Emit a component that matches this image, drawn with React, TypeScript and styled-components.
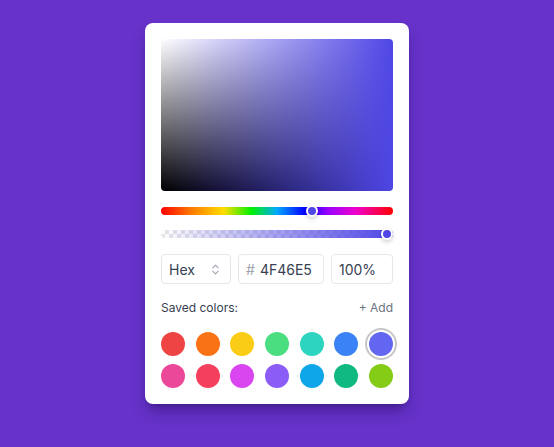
import * as React from "react"
import styled, { createGlobalStyle } from "styled-components"
import { ChevronsUpDown } from "lucide-react"

const HEX = "#4F46E5"
const HUE_POS = 65
const ALPHA_POS = 97.6

const SAVED = [
  "#ef4444", "#f97316", "#facc15", "#4ade80", "#2dd4bf", "#3b82f6", "#6366f1",
  "#ec4899", "#f43f5e", "#d946ef", "#8b5cf6", "#0ea5e9", "#10b981", "#84cc16",
]

const GlobalStyle = createGlobalStyle`
  html, body {
    margin: 0;
    padding: 0;
    background: #6632ca;
  }
  body {
    font-family: Inter, "Noto Sans", sans-serif;
    -webkit-font-smoothing: antialiased;
  }
`

const Page = styled.div`
  display: flex;
  justify-content: center;
  align-items: flex-start;
  padding-top: 23px;
  min-height: 447px;
  box-sizing: border-box;
`

const Card = styled.div`
  width: 264px;
  box-sizing: border-box;
  padding: 16px;
  background: #fff;
  border-radius: 8px;
  box-shadow: 0 10px 15px -3px rgba(20, 0, 60, 0.35), 0 4px 6px -4px rgba(20, 0, 60, 0.3);
  display: flex;
  flex-direction: column;
`

// white-to-black on the left, fading into the picked colour on the right
const Saturation = styled.div<{ $color: string }>`
  height: 152px;
  border-radius: 4px;
  background:
    linear-gradient(to right, rgba(255, 255, 255, 0), ${({ $color }) => $color}),
    linear-gradient(to bottom, #ffffff, #000000);
`

const Track = styled.div`
  position: relative;
  height: 8px;
  border-radius: 4px;
  margin-top: 16px;
`

const HueTrack = styled(Track)`
  background: linear-gradient(
    to right,
    #ff0000 0%,
    #ff7a00 13%,
    #ffdd00 27%,
    #00f000 39%,
    #00a8ff 50%,
    #0000ff 62%,
    #9900ff 72%,
    #ee00cc 84%,
    #ff0000 100%
  );
`

const AlphaTrack = styled(Track)<{ $color: string }>`
  margin-top: 15px;
  background:
    linear-gradient(to right, rgba(79, 70, 229, 0), ${({ $color }) => $color}),
    repeating-conic-gradient(#e6e6e6 0% 25%, #ffffff 0% 50%) 0 0 / 8px 8px;
`

const Thumb = styled.div<{ $color: string }>`
  position: absolute;
  top: 50%;
  width: 8px;
  height: 8px;
  border-radius: 50%;
  border: 2px solid #fff;
  background: ${({ $color }) => $color};
  transform: translate(-50%, -50%);
  box-shadow: 0 2px 4px rgba(0, 0, 0, 0.18);
`

const Fields = styled.div`
  display: grid;
  grid-template-columns: 70px 1fr 62px;
  gap: 7px;
  margin-top: 16px;
`

const Field = styled.div`
  display: flex;
  align-items: center;
  height: 30px;
  box-sizing: border-box;
  padding: 0 7px;
  border: 1px solid #e5e7eb;
  border-radius: 4px;
  font-size: 14px;
  color: #374151;
`

const SelectField = styled(Field)`
  justify-content: space-between;
  padding-right: 8px;
`

const Hash = styled.span`
  color: #9ca3af;
  margin-right: 5px;
`

const SavedHeader = styled.div`
  display: flex;
  justify-content: space-between;
  align-items: center;
  margin-top: 16px;
  font-size: 12px;
  line-height: 16px;
`

const SavedLabel = styled.span`
  color: #374151;
`

const AddButton = styled.span`
  color: #6b7280;
`

const Swatches = styled.div`
  display: grid;
  grid-template-columns: repeat(7, 24px);
  justify-content: space-between;
  row-gap: 8px;
  margin-top: 16px;
`

const Swatch = styled.div<{ $color: string; $active?: boolean }>`
  width: 24px;
  height: 24px;
  border-radius: 50%;
  background: ${({ $color }) => $color};
  box-shadow: ${({ $active }) => ($active ? "0 0 0 2px #fff, 0 0 0 4px #c6c6c6" : "none")};
`

export default function App() {
  return (
    <Page>
      <GlobalStyle />
      <Card>
        <Saturation $color={HEX} />
        <HueTrack>
          <Thumb $color={HEX} style={{ left: `${HUE_POS}%` }} />
        </HueTrack>
        <AlphaTrack $color={HEX}>
          <Thumb $color={HEX} style={{ left: `${ALPHA_POS}%` }} />
        </AlphaTrack>
        <Fields>
          <SelectField>
            Hex
            <ChevronsUpDown size={13} color="#9ca3af" strokeWidth={2} />
          </SelectField>
          <Field>
            <Hash>#</Hash>4F46E5
          </Field>
          <Field>100%</Field>
        </Fields>
        <SavedHeader>
          <SavedLabel>Saved colors:</SavedLabel>
          <AddButton>+ Add</AddButton>
        </SavedHeader>
        <Swatches>
          {SAVED.map((c) => (
            <Swatch key={c} $color={c} $active={c === "#6366f1"} />
          ))}
        </Swatches>
      </Card>
    </Page>
  )
}
